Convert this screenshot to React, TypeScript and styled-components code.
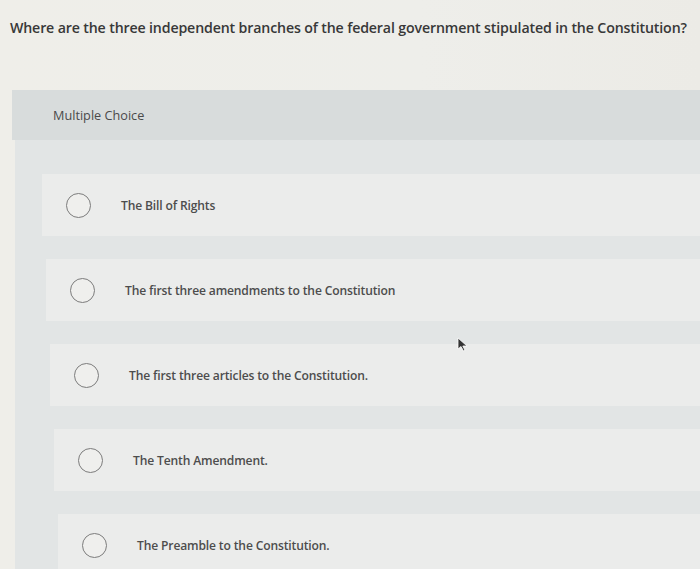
import styled, { createGlobalStyle } from "styled-components"

const GlobalStyle = createGlobalStyle`
    html, body {
        margin: 0;
        padding: 0;
        background: #eeede9;
        font-family: "Open Sans", "Lato", sans-serif;
        overflow: hidden;
    }
`

const Page = styled.div`
    position: relative;
    width: 700px;
    height: 569px;
    overflow: hidden;
    background: linear-gradient(90deg, #efeee9 0%, #eeeeea 60%, #ecebe6 100%);
`

const Question = styled.h1`
    margin: 0;
    padding: 19px 0 0 10px;
    font-size: 14.2px;
    line-height: 18px;
    font-weight: 600;
    color: #383838;
    letter-spacing: -0.15px;
    white-space: nowrap;
`

const Header = styled.div`
    margin: 53px 0 0 12px;
    height: 50px;
    display: flex;
    align-items: center;
    padding-left: 41px;
    background: #d8dcdc;
    font-size: 12.7px;
    color: #4a4a4a;
`

const Panel = styled.div`
    margin-left: 15px;
    padding-top: 34px;
    display: flex;
    flex-direction: column;
    gap: 23px;
    background: #e2e5e5;
    min-height: 430px;
`

const Card = styled.div<{ $indent: number }>`
    margin-left: ${(p) => p.$indent}px;
    height: 62px;
    display: flex;
    align-items: center;
    padding-left: 24px;
    gap: 30px;
    background: #ebeceb;
`

const Radio = styled.span`
    width: 23px;
    height: 23px;
    flex: none;
    border-radius: 50%;
    border: 1.5px solid #7c7c7c;
    background: #efefed;
`

const Label = styled.span`
    font-size: 12.1px;
    font-weight: 600;
    color: #4d4d4d;
    letter-spacing: -0.15px;
`

const Pointer = styled.svg`
    position: absolute;
    left: 457px;
    top: 337px;
`

const options = [
    "The Bill of Rights",
    "The first three amendments to the Constitution",
    "The first three articles to the Constitution.",
    "The Tenth Amendment.",
    "The Preamble to the Constitution.",
]

export default function App() {
    return (
        <>
            <GlobalStyle />
            <Page>
                <Question>
                    Where are the three independent branches of the federal government stipulated in the Constitution?
                </Question>
                <Header>Multiple Choice</Header>
                <Panel>
                    {options.map((texto, i) => (
                        <Card key={texto} $indent={27 + i * 4}>
                            <Radio />
                            <Label>{texto}</Label>
                        </Card>
                    ))}
                </Panel>
                <Pointer width="12" height="16" viewBox="0 0 12 16">
                    <path d="M1 1 L1 12 L4 9.5 L6.5 14 L8 13.3 L5.8 9 L10 9 Z" fill="#333" stroke="#fff" strokeWidth="0.8" />
                </Pointer>
            </Page>
        </>
    )
}
